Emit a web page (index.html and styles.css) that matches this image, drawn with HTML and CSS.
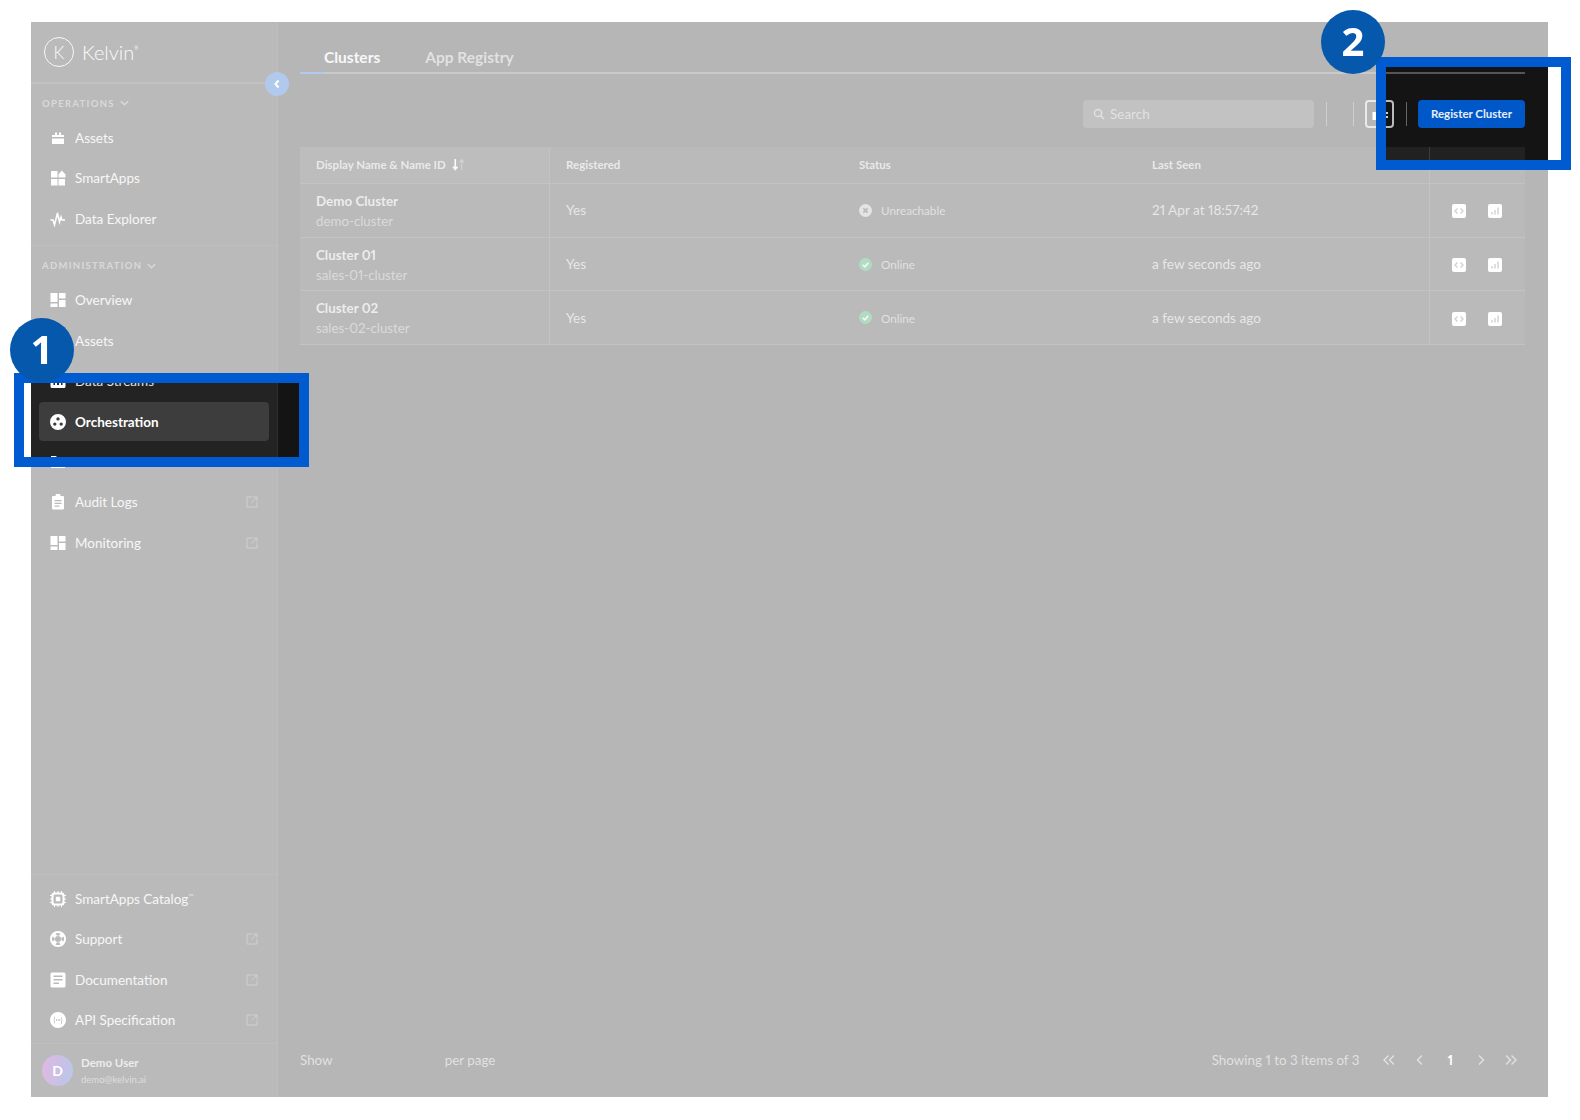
FILE: index.html
```html
<!DOCTYPE html>
<html lang="en">
<head>
<meta charset="utf-8">
<title>Kelvin Clusters</title>
<link rel="stylesheet" href="styles.css">
</head>
<body>
<div class="app">
  <aside class="sidebar">
    <div class="brand">
      <span class="logo-ring">K</span>
      <span class="logo-word">Kelvin</span><span class="logo-tm">®</span>
    </div>
    <section class="nav-group first">
      <div class="group-label">OPERATIONS <svg class="caret" viewBox="0 0 10 6"><path d="M1 1l4 4 4-4"/></svg></div>
      <a class="nav-row"><svg class="ico" viewBox="0 0 16 16"><path d="M2 7V5h3V2.500h2V5h2V2.500h2V5h3v2zM2 8.500h12V14H2z"/></svg><span class="nav-text">Assets</span></a>
      <a class="nav-row"><svg class="ico" viewBox="0 0 16 16"><path d="M1 1h6.500v6.500H1zM11.800 .5l3.700 4v3H8.500v-3zM1 9h6.500v6.500H1zM8.500 9H15v6.500H8.500z"/></svg><span class="nav-text">SmartApps</span></a>
      <a class="nav-row"><svg class="ico line" viewBox="0 0 16 16"><path d="M.5 9H3l1.500 5L7.500 2l2 9 1.500-5 1 3h3"/></svg><span class="nav-text">Data Explorer</span></a>
    </section>
    <section class="nav-group">
      <div class="group-label second">ADMINISTRATION <svg class="caret" viewBox="0 0 10 6"><path d="M1 1l4 4 4-4"/></svg></div>
      <a class="nav-row"><svg class="ico" viewBox="0 0 16 16"><path d="M.5 1h7v9h-7zM9 1h6.500v5.500H9zM.5 11.500h7V15h-7zM9 8h6.500v7H9z"/></svg><span class="nav-text">Overview</span></a>
      <a class="nav-row"><svg class="ico" viewBox="0 0 16 16"><path d="M2 7V5h3V2.500h2V5h2V2.500h2V5h3v2zM2 8.500h12V14H2z"/></svg><span class="nav-text">Assets</span></a>
      <a class="nav-row"><svg class="ico" viewBox="0 0 16 16"><path fill-rule="evenodd" d="M2 1h12a1.500 1.500 0 011.500 1.500v11A1.500 1.500 0 0114 15H2a1.500 1.500 0 01-1.500-1.500v-11A1.500 1.500 0 012 1zM3.500 7v5H5V7zM7 5v7h2V5zM11 8v4h1.500V8z"/></svg><span class="nav-text">Data Streams</span></a>
      <a class="nav-row active"><svg class="ico" viewBox="0 0 16 16"><path fill-rule="evenodd" d="M8 0a8 8 0 110 16A8 8 0 018 0zM8 3.200a1.700 1.700 0 100 3.400 1.700 1.700 0 000-3.400zM4.800 8.400a1.700 1.700 0 100 3.400 1.700 1.700 0 000-3.400zM11.200 8.400a1.700 1.700 0 100 3.400 1.700 1.700 0 000-3.400z"/></svg><span class="nav-text">Orchestration</span></a>
      <a class="nav-row"><svg class="ico" viewBox="0 0 16 16"><path d="M1 2h5l1.500 2H15v3H1zM1 8h14v6H1z"/></svg><span class="nav-text">Connections</span></a>
      <a class="nav-row"><svg class="ico" viewBox="0 0 16 16"><path fill-rule="evenodd" d="M3 2h2.500a2.500 2.500 0 015 0H13a1 1 0 011 1v11.500a1 1 0 01-1 1H3a1 1 0 01-1-1V3a1 1 0 011-1zM4.500 6v1.200h7V6zM4.500 8.800V10h7V8.800zM4.500 11.500v1.200h5v-1.200z"/></svg><span class="nav-text">Audit Logs</span><svg class="ext" viewBox="0 0 12 12"><path d="M6 1H1v10h10V6M7 1h4v4M11 1L5.500 6.500"/></svg></a>
      <a class="nav-row"><svg class="ico" viewBox="0 0 16 16"><path d="M.5 1h7v9h-7zM9 1h6.500v5.500H9zM.5 11.500h7V15h-7zM9 8h6.500v7H9z"/></svg><span class="nav-text">Monitoring</span><svg class="ext" viewBox="0 0 12 12"><path d="M6 1H1v10h10V6M7 1h4v4M11 1L5.500 6.500"/></svg></a>
    </section>
    <section class="nav-group bottom">
      <a class="nav-row"><svg class="ico" viewBox="0 0 16 16"><path fill-rule="evenodd" d="M4 1.500h8A2.500 2.500 0 0114.500 4v8a2.500 2.500 0 01-2.500 2.500H4A2.500 2.500 0 011.500 12V4A2.500 2.500 0 014 1.500zM5 3.500A1.500 1.500 0 003.500 5v6A1.500 1.500 0 005 12.500h6a1.500 1.500 0 001.500-1.500V5A1.500 1.500 0 0011 3.500zM5.800 5.800h4.400v4.400H5.800zM4 0h1v1.500H4zM7.500 0h1v1.500h-1zM11 0h1v1.500h-1zM4 14.500h1V16H4zM7.500 14.500h1V16h-1zM11 14.500h1V16h-1zM0 4h1.500v1H0zM0 7.500h1.500v1H0zM0 11h1.500v1H0zM14.500 4H16v1h-1.500zM14.500 7.500H16v1h-1.500zM14.500 11H16v1h-1.500z"/></svg><span class="nav-text">SmartApps Catalog<sup class="tm">™</sup></span></a>
      <a class="nav-row"><svg class="ico" viewBox="0 0 16 16"><path fill-rule="evenodd" d="M8 0a8 8 0 110 16A8 8 0 018 0zM8 5a3 3 0 100 6 3 3 0 000-6zM5.500 2.500L7 4.700a3.600 3.600 0 012 0l1.500-2.200a6 6 0 00-5 0zM2.500 5.500a6 6 0 000 5L4.700 9a3.600 3.600 0 010-2zM13.500 5.500L11.300 7a3.600 3.600 0 010 2l2.200 1.500a6 6 0 000-5zM7 11.300l-1.500 2.200a6 6 0 005 0L9 11.300a3.600 3.600 0 01-2 0z"/></svg><span class="nav-text">Support</span><svg class="ext" viewBox="0 0 12 12"><path d="M6 1H1v10h10V6M7 1h4v4M11 1L5.500 6.500"/></svg></a>
      <a class="nav-row"><svg class="ico" viewBox="0 0 16 16"><path fill-rule="evenodd" d="M2 .5h12A1.500 1.500 0 0115.500 2v12a1.500 1.500 0 01-1.500 1.500H2A1.500 1.500 0 01.5 14V2A1.500 1.500 0 012 .5zM3.500 3.500V5h9V3.500zM3.500 7v1.500h9V7zM3.500 10.500V12H9v-1.500z"/></svg><span class="nav-text">Documentation</span><svg class="ext" viewBox="0 0 12 12"><path d="M6 1H1v10h10V6M7 1h4v4M11 1L5.500 6.500"/></svg></a>
      <a class="nav-row"><svg class="ico" viewBox="0 0 16 16"><path fill-rule="evenodd" d="M8 0a8 8 0 110 16A8 8 0 018 0zM5 4.500C3.800 4.500 4 6 4 7s-1 1-1 1 1 0 1 1-.2 2.500 1 2.500v-1c-.6 0-.2-1-.3-1.700C4.600 8.500 4 8 4 8s.6-.5.7-1.300C4.800 6 4.400 5.500 5 5.500zM11 4.500v1c.6 0 .2.500.3 1.200.1.800.7 1.300.7 1.300s-.6.500-.7 1.300c-.1.700.3 1.700-.3 1.700v1c1.200 0 1-1.500 1-2.500s1-1 1-1-1 0-1-1 .2-2.500-1-2.500zM6 7.300v1.400h1V7.300zM7.700 7.300v1.400h1V7.300zM9.300 7.300v1.400h1V7.300z"/></svg><span class="nav-text">API Specification</span><svg class="ext" viewBox="0 0 12 12"><path d="M6 1H1v10h10V6M7 1h4v4M11 1L5.500 6.500"/></svg></a>
    </section>
    <div class="user">
      <span class="avatar">D</span>
      <div class="user-text">
        <div class="user-name">Demo User</div>
        <div class="user-mail">demo@kelvin.ai</div>
      </div>
    </div>
  </aside>

  <main class="main">
    <nav class="tabs">
      <span class="tab on">Clusters</span>
      <span class="tab">App Registry</span>
    </nav>
    <div class="toolbar">
      <div class="search">
        <svg class="search-ico" viewBox="0 0 12 12"><circle cx="5" cy="5" r="3.600"/><path d="M7.600 7.600L11 11"/></svg>
        <span>Search</span>
      </div>
      <span class="vline first"></span>
      <span class="vline second"></span>
      <span class="toggle"><svg viewBox="0 0 18 18"><path d="M1.500 7H8v8H1.500z"/><circle cx="16" cy="8" r="1.100"/><circle cx="16" cy="12" r="1.100"/></svg></span>
      <span class="vline third"></span>
      <button class="primary">Register Cluster</button>
    </div>
    <div class="table">
      <div class="cell head name-col">Display Name &amp; Name ID
        <svg class="sort" viewBox="0 0 12 12"><path class="down" d="M3 1v9M1 8l2 2.500L5 8"/><path class="up" d="M9 11V2M7 4l2-2.500L11 4"/></svg>
      </div>
      <div class="cell head">Registered</div>
      <div class="cell head">Status</div>
      <div class="cell head">Last Seen</div>
      <div class="cell head action-col"></div>

      <div class="cell row name-col"><b>Demo Cluster</b><small>demo-cluster</small></div>
      <div class="cell row">Yes</div>
      <div class="cell row status"><svg class="dot off" viewBox="0 0 14 14"><circle cx="7" cy="7" r="7"/><path d="M4.700 4.700l4.600 4.600M9.300 4.700L4.700 9.300"/></svg>Unreachable</div>
      <div class="cell row">21 Apr at 18:57:42</div>
      <div class="cell row action-col"><span class="act"><svg viewBox="0 0 14 14"><path d="M5.500 4.500L3 7l2.500 2.500M8.500 4.500L11 7 8.500 9.500"/></svg></span><span class="act"><svg viewBox="0 0 14 14"><path d="M4 8v2.500M7 6v4.500M10 3.500v7"/></svg></span></div>

      <div class="cell row name-col"><b>Cluster 01</b><small>sales-01-cluster</small></div>
      <div class="cell row">Yes</div>
      <div class="cell row status"><svg class="dot on" viewBox="0 0 14 14"><circle cx="7" cy="7" r="7"/><path d="M4 7.300l2.200 2.200L10 5.200"/></svg>Online</div>
      <div class="cell row">a few seconds ago</div>
      <div class="cell row action-col"><span class="act"><svg viewBox="0 0 14 14"><path d="M5.500 4.500L3 7l2.500 2.500M8.500 4.500L11 7 8.500 9.500"/></svg></span><span class="act"><svg viewBox="0 0 14 14"><path d="M4 8v2.500M7 6v4.500M10 3.500v7"/></svg></span></div>

      <div class="cell row name-col"><b>Cluster 02</b><small>sales-02-cluster</small></div>
      <div class="cell row">Yes</div>
      <div class="cell row status"><svg class="dot on" viewBox="0 0 14 14"><circle cx="7" cy="7" r="7"/><path d="M4 7.300l2.200 2.200L10 5.200"/></svg>Online</div>
      <div class="cell row">a few seconds ago</div>
      <div class="cell row action-col"><span class="act"><svg viewBox="0 0 14 14"><path d="M5.500 4.500L3 7l2.500 2.500M8.500 4.500L11 7 8.500 9.500"/></svg></span><span class="act"><svg viewBox="0 0 14 14"><path d="M4 8v2.500M7 6v4.500M10 3.500v7"/></svg></span></div>
    </div>
    <footer class="foot">
      <span class="show">Show</span>
      <span class="perpage">per page</span>
      <span class="count">Showing 1 to 3 items of 3</span>
      <div class="pager">
        <svg viewBox="0 0 14 12"><path d="M6.500 1.500L2 6l4.500 4.500M12 1.500L7.500 6l4.500 4.500"/></svg>
        <svg viewBox="0 0 14 12"><path d="M9 1.500L4.500 6 9 10.500"/></svg>
        <span class="page-now">1</span>
        <svg viewBox="0 0 14 12"><path d="M5 1.500L9.500 6 5 10.500"/></svg>
        <svg viewBox="0 0 14 12"><path d="M2 1.500L6.500 6 2 10.500M7.500 1.500L12 6l-4.500 4.500"/></svg>
      </div>
    </footer>
  </main>
  <button class="collapse"><svg viewBox="0 0 8 10"><path d="M5.500 1.500L2.500 5l3 3.500"/></svg></button>
</div>

<div class="wash"></div>
<div class="frame frame-one"></div>
<div class="frame frame-two"></div>
<div class="badge badge-one">1</div>
<div class="badge badge-two">2</div>
</body>
</html>
```

FILE: styles.css
```css
* { box-sizing: border-box; }
html, body { margin: 0; height: 100%; background: #fff; }
body {
  font-family: "Lato", "Open Sans", sans-serif;
  font-feature-settings: "pnum" 1;
  padding: 22px 32px 23px 31px;
  overflow: hidden;
  position: relative;
}
.app {
  height: 1075px;
  display: flex;
  background: #141414;
  color: #fff;
  position: relative;
}

/* sidebar */
.sidebar {
  width: 247px;
  flex: none;
  background: #232323;
  border-right: 1px solid #2e2e2e;
  display: flex;
  flex-direction: column;
}
.brand {
  height: 62px;
  flex: none;
  padding: 0 0 0 13px;
  display: flex;
  align-items: center;
  border-bottom: 2px solid #3c3c3c;
}
.logo-ring {
  width: 30px;
  height: 30px;
  border: 1.500px solid #e4e4e4;
  border-radius: 50%;
  font-size: 17px;
  font-weight: 300;
  display: flex;
  align-items: center;
  justify-content: center;
  color: #eee;
}
.logo-word { margin-left: 8px; font-size: 20px; font-weight: 300; color: #eee; }
.logo-tm { font-size: 5px; align-self: flex-start; margin-top: 23px; color: #ddd; }
.nav-group { padding-bottom: 5.500px; flex: none; }
.nav-group.first { border-bottom: 1px solid #333; }
.nav-group.bottom { padding: 4px 0 2px; border-top: 1px solid #333; border-bottom: 1px solid #333; margin-top: auto; }
.group-label {
  height: 34.500px;
  padding: 4px 0 0 11px;
  display: flex;
  align-items: center;
  gap: 5px;
  font-size: 9.500px;
  font-weight: 700;
  letter-spacing: 1.300px;
  color: #868686;
}
.group-label.second { height: 34.700px; padding: 4px 0 0 11px; }
.caret { width: 9px; height: 6px; fill: none; stroke: #868686; stroke-width: 1.600; }
.nav-row {
  height: 39px;
  margin: 0 8px 1.400px 8px;
  padding: 0 11px 0 11px;
  display: flex;
  align-items: center;
  border-radius: 4px;
  font-size: 13.500px;
  color: #e2e2e2;
}
.nav-row.active { background: #3d3d3d; color: #fff; font-weight: 700; }
.nav-text { margin-left: 9px; flex: 1; }
.ico { width: 16px; height: 16px; fill: #fff; flex: none; }
.ico.line { fill: none; stroke: #fff; stroke-width: 1.500; }
.ext { width: 12px; height: 12px; flex: none; fill: none; stroke: #666; stroke-width: 1; }
.tm { font-size: 7px; line-height: 0; color: #bbb; }
.user {
  height: 53px;
  flex: none;
  display: flex;
  align-items: center;
  padding: 0 0 0 11px;
  gap: 8px;
}
.avatar {
  width: 31px;
  height: 31px;
  border-radius: 50%;
  background: linear-gradient(100deg, #9b1a9b, #1a4dbb);
  display: flex;
  align-items: center;
  justify-content: center;
  font-size: 14px;
  font-weight: 700;
}
.user-name { font-size: 11.500px; font-weight: 700; color: #c4c4c4; margin-bottom: 5px; }
.user-mail { font-size: 9.500px; color: #949494; }

/* main */
.main {
  flex: 1;
  min-width: 0;
  padding: 0 23px 0 22px;
  display: flex;
  flex-direction: column;
}
.tabs {
  height: 52px;
  flex: none;
  padding-left: 24px;
  display: flex;
  gap: 45px;
  align-items: flex-end;
  border-bottom: 2px solid #555;
  position: relative;
  font-size: 15.500px;
  font-weight: 700;
  color: #a0a0a0;
}
.tabs::after {
  content: "";
  position: absolute;
  left: 0;
  bottom: -2px;
  width: 24px;
  height: 2px;
  background: #0a56c4;
}
.tab { padding-bottom: 6px; }
.tab.on { color: #e6e6e6; }
.toolbar {
  height: 28px;
  margin-top: 26px;
  flex: none;
  display: flex;
  align-items: center;
  justify-content: flex-end;
}
.search {
  width: 231px;
  height: 28px;
  padding: 0 10px 1px;
  border-radius: 4px;
  background: #3a3a3a;
  display: flex;
  align-items: center;
  gap: 5px;
  font-size: 13.500px;
  color: #a0a0a0;
}
.search-ico { width: 12px; height: 12px; fill: none; stroke: #a0a0a0; stroke-width: 1.500; }
.vline { width: 1px; height: 24px; background: #666; flex: none; }
.vline.first { margin-left: 12px; }
.vline.second { margin-left: 26px; }
.vline.third { margin: 0 11px 0 12px; }
.toggle {
  width: 29px;
  height: 28px;
  margin-left: 11px;
  border: 2px solid #bbb;
  border-radius: 4px;
  display: flex;
  align-items: center;
  justify-content: center;
}
.toggle svg { width: 18px; height: 18px; flex: none; fill: #fff; }
.primary {
  width: 107px;
  height: 28px;
  padding: 0 0 1px;
  border: 0;
  border-radius: 4px;
  background: #0057c8;
  color: #e8eefb;
  font: 700 11.500px "Lato", sans-serif;
}

/* table */
.table {
  margin-top: 19px;
  flex: none;
  display: grid;
  grid-template-columns: 250px 293px 293px 293px 96px;
  grid-auto-rows: 53.700px;
  grid-template-rows: 37px;
  background: #212121;
}
.cell {
  padding-left: 16px;
  display: flex;
  align-items: center;
  border-bottom: 1px solid #3d3d3d;
  font-size: 13.600px;
  color: #b4b4b4;
}
.cell.head { font-size: 11.500px; font-weight: 700; color: #bcbcbc; padding-bottom: 1px; }
.name-col { border-right: 1px solid #3d3d3d; }
.head.name-col { background: #2a2a2a; }
.action-col { border-left: 1px solid #3d3d3d; padding-left: 22px; gap: 22px; }
.row.action-col { padding-top: 2px; }
.row.name-col { flex-direction: column; align-items: flex-start; justify-content: center; gap: 4px; padding-top: 2px; }
.row b { font-size: 13.400px; color: #c4c4c4; line-height: 16px; }
.row small { font-size: 13.300px; color: #8a8a8a; line-height: 17px; }
.sort { width: 13px; height: 13px; margin-left: 6px; fill: none; }
.sort .down { stroke: #eee; stroke-width: 1.500; }
.sort .up { stroke: #777; stroke-width: 1; }
.status { font-size: 11.700px; color: #a0a0a0; gap: 9px; }
.dot { width: 13px; height: 13px; fill: #a8a8a8; }
.dot path { fill: none; stroke: #212121; stroke-width: 1.800; }
.dot.on { fill: #008e3c; }
.dot.on path { stroke: #e4e4e4; }
.act {
  width: 14px;
  height: 14px;
  border-radius: 2px;
  background: #fff;
  display: block;
}
.act svg { display: block; width: 14px; height: 14px; fill: none; stroke: #777; stroke-width: 1.500; }

/* footer */
.foot {
  margin-top: auto;
  height: 74px;
  flex: none;
  display: flex;
  align-items: center;
  font-size: 13.400px;
  color: #a0a0a0;
}
.perpage { margin-left: 112px; }
.count { margin-left: auto; }
.pager { margin: 0 7px 0 23px; display: flex; align-items: center; gap: 16.400px; }
.pager svg { width: 14px; height: 12px; fill: none; stroke: #a0a0a0; stroke-width: 1.400; }
.page-now { color: #fff; font-weight: 700; width: 14px; text-align: center; }

/* overlays */
.collapse {
  position: absolute;
  left: 234px;
  top: 50px;
  width: 24px;
  height: 24px;
  padding: 0;
  border: 0;
  border-radius: 50%;
  background: #0052c4;
  display: flex;
  align-items: center;
  justify-content: center;
}
.collapse svg { width: 8px; height: 10px; fill: none; stroke: #fff; stroke-width: 2; }
.wash {
  position: fixed;
  inset: 0;
  background: rgba(255, 255, 255, .69);
  clip-path: path(evenodd, "M0 0H1580V1120H0Z M24 383H299V457H24Z M1386 67H1561V160H1386Z");
}
.frame { position: fixed; border: 10px solid #005bd1; }
.frame-one { left: 14px; top: 373px; width: 295px; height: 94px; }
.frame-two { left: 1376px; top: 57px; width: 195px; height: 113px; }
.badge {
  position: fixed;
  width: 64px;
  height: 64px;
  padding-bottom: 4px;
  border-radius: 50%;
  background: #0558ac;
  color: #fff;
  display: flex;
  align-items: center;
  justify-content: center;
  font: 700 40px "Open Sans", sans-serif;
}
.badge-one { left: 10px; top: 318px; }
.badge-two { left: 1321px; top: 10px; }
```
